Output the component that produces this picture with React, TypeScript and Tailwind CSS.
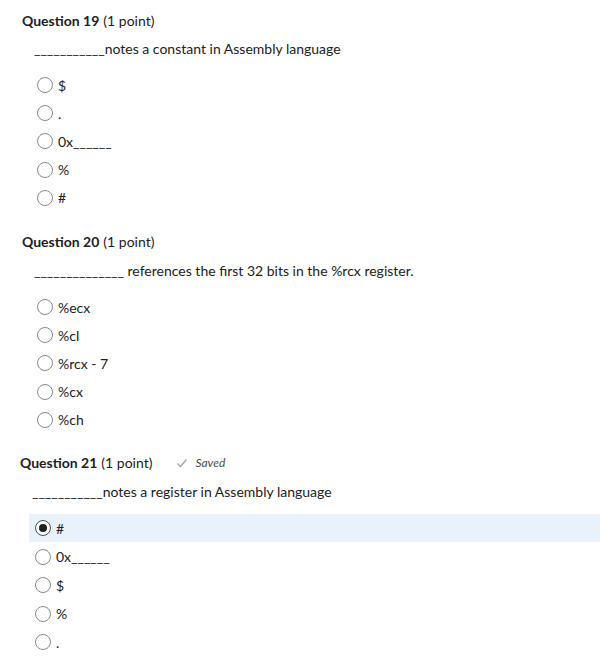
import React from 'react';

type Option = { label: string; selected?: boolean };

interface QuestionProps {
    number: number;
    prompt: string;
    options: Option[];
    saved?: boolean;
    className?: string;
    rowClass?: string;
}

function Radio({ selected }: { selected?: boolean }) {
    if (selected) {
        return (
            <span className="w-4 h-4 rounded-full border border-[#494c4e] bg-white flex items-center justify-center shrink-0">
                <span className="w-2 h-2 rounded-full bg-[#202122]"></span>
            </span>
        );
    }
    return <span className="w-4 h-4 rounded-full border border-[#868a8d] bg-white shrink-0"></span>;
}

function Question({ number, prompt, options, saved, className, rowClass = 'h-[28.2px]' }: QuestionProps) {
    return (
        <section className={className}>
            <div className="flex items-center h-5 text-[14px] text-[#202122]">
                <span className="font-bold">Question {number}</span>
                <span className="ml-1">(1 point)</span>
                {saved && (
                    <span className="flex items-center ml-[24px] text-[12px] italic text-[#494c4e]">
                        <svg width="12" height="12" viewBox="0 0 12 12" className="mr-[7px]">
                            <path d="M1.5 6.5 L4.5 9.5 L10.5 2.5" fill="none" stroke="#a0a4a7" strokeWidth="1.3" />
                        </svg>
                        Saved
                    </span>
                )}
            </div>
            <p className="h-5 leading-5 mt-[9px] ml-3 text-[14px] text-[#202122]">{prompt}</p>
            <ul className="mt-[12px] ml-[9px]">
                {options.map((o, i) => (
                    <li
                        key={i}
                        className={`${rowClass} flex items-center gap-[5px] pl-[6px] text-[14px] text-[#202122] ${o.selected ? 'bg-[#e9f1fb]' : ''}`}
                    >
                        <Radio selected={o.selected} />
                        <span>{o.label}</span>
                    </li>
                ))}
            </ul>
        </section>
    );
}

export default function App() {
    return (
        <div className="w-[600px] h-[664px] bg-white pl-[22px] pt-[10px] overflow-hidden" style={{ fontFamily: 'Lato, "Open Sans", sans-serif' }}>
            <Question
                number={19}
                prompt="___________notes a constant in Assembly language"
                options={[{ label: '$' }, { label: '.' }, { label: '0x______' }, { label: '%' }, { label: '#' }]}
            />
            <Question
                className="mt-[20px]"
                number={20}
                prompt="______________ references the first 32 bits in the %rcx register."
                options={[{ label: '%ecx' }, { label: '%cl' }, { label: '%rcx - 7' }, { label: '%cx' }, { label: '%ch' }]}
            />
            <Question
                className="mt-[19px] -ml-[2px]"
                number={21}
                saved
                rowClass="h-[28.5px]"
                prompt="___________notes a register in Assembly language"
                options={[{ label: '#', selected: true }, { label: '0x______' }, { label: '$' }, { label: '%' }, { label: '.' }]}
            />
        </div>
    );
}
